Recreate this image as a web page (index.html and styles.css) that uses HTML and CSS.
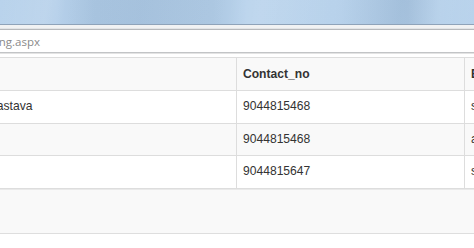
FILE: index.html
```html
<!DOCTYPE html>
<html>
<head>
<meta charset="utf-8">
<link rel="stylesheet" href="styles.css">
</head>
<body>
<div class="window">
  <div class="titlebar"></div>
  <div class="toolbar"></div>
  <div class="addressbar">
    <div class="url"><span>http://localhost:49210/Listing.aspx</span></div>
  </div>
  <div class="page">
    <table class="grid">
      <colgroup>
        <col class="c1"><col class="c2"><col class="c3">
      </colgroup>
      <thead>
        <tr class="head"><th>Name</th><th>Contact_no</th><th>Email</th></tr>
      </thead>
      <tbody>
        <tr><td>Ankit Shrivastava</td><td>9044815468</td><td>shivam@gmail.com</td></tr>
        <tr class="alt"><td>Amit Jain</td><td>9044815468</td><td>amit@gmail.com</td></tr>
        <tr><td>Ravi Sen</td><td>9044815647</td><td>sunil@gmail.com</td></tr>
      </tbody>
    </table>
    <div class="footer"></div>
  </div>
</div>
</body>
</html>
```
FILE: styles.css
```css
html, body {
  margin: 0;
  padding: 0;
  overflow: hidden;
  background: #ffffff;
}
.window {
  width: 474px;
  height: 248px;
  overflow: hidden;
  font-family: "Liberation Sans", Arial, sans-serif;
  color: #333333;
}
.titlebar {
  height: 24px;
  border-bottom: 1px solid #8fa3b9;
  background:
    linear-gradient(100deg, rgba(255,255,255,0) 0%, rgba(255,255,255,0.10) 10%, rgba(255,255,255,0) 14%, rgba(90,120,160,0.06) 30%, rgba(255,255,255,0) 48%, rgba(255,255,255,0.10) 55%, rgba(255,255,255,0) 70%, rgba(90,120,160,0.07) 84%, rgba(255,255,255,0.06) 92%, rgba(255,255,255,0) 100%),
    linear-gradient(90deg, #b9d3ec 0%, #b6d0ea 12%, #a9c5e0 20%, #adc8e2 45%, #b9d3ec 52%, #b8d2eb 72%, #a8c4df 86%, #b5d0ea 93%, #b9d3ec 100%);
}
.toolbar {
  height: 3px;
  background: #f1f2f3;
  border-bottom: 1px solid #e2e4e6;
}
.addressbar {
  height: 22px;
  border-top: 1px solid #b7b9bc;
  border-bottom: 1px solid #c2c4c6;
  box-shadow: 0 1px 0 #e3e3e3;
  background: #ffffff;
  display: flex;
  align-items: center;
}
.url {
  width: 40px;
  display: flex;
  justify-content: flex-end;
  white-space: nowrap;
  font-family: "Open Sans", "Noto Sans", sans-serif;
  font-size: 11.5px;
  color: #8a8a8a;
}
.page {
  padding-top: 4px;
}
.grid {
  border-collapse: collapse;
  table-layout: fixed;
  width: 629px;
  margin-left: -68px;
  font-size: 12.1px;
  border-top: 1px solid #dddddd;
  border-bottom: 1px solid #dddddd;
}
.c1 { width: 304px; }
.c2 { width: 228px; }
.c3 { width: 97px; }
.grid th, .grid td {
  border-left: 1px solid #dddddd;
  border-right: 1px solid #dddddd;
  padding: 7px 6px;
  text-align: left;
  white-space: nowrap;
  overflow: hidden;
  vertical-align: middle;
}
.grid th {
  font-weight: bold;
  line-height: 18px;
  background: #f9f9f9;
  border-bottom: 1px solid #dddddd;
}
.grid td {
  line-height: 17.5px;
  border-top: 1px solid #dddddd;
}
.grid tr.alt td {
  background: #f9f9f9;
}
.footer {
  height: 43px;
  border-top: 1px solid #e9e9e9;
  border-bottom: 1px solid #dedede;
  background: #f9f9f9;
}
```
